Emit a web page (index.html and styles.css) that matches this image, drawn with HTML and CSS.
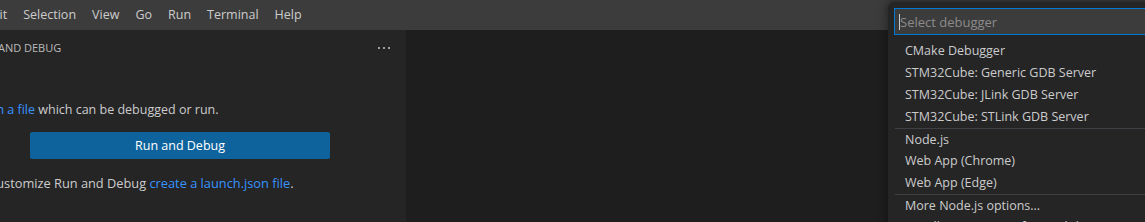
FILE: index.html
```html
<!DOCTYPE html>
<html>
<head>
<meta charset="utf-8">
<link rel="stylesheet" href="styles.css">
</head>
<body>
<div class="window">
  <div class="titlebar">
    <nav class="menubar">
      <span class="menu">Edit</span>
      <span class="menu">Selection</span>
      <span class="menu">View</span>
      <span class="menu">Go</span>
      <span class="menu">Run</span>
      <span class="menu">Terminal</span>
      <span class="menu">Help</span>
    </nav>
  </div>
  <div class="main">
    <aside class="sidebar">
      <div class="sidebar-header">
        <span class="sidebar-title">Run and Debug</span>
        <span class="more">
          <svg width="16" height="16" viewBox="0 0 16 16"><circle cx="3" cy="8" r="1" fill="#c5c5c5"/><circle cx="8" cy="8" r="1" fill="#c5c5c5"/><circle cx="13" cy="8" r="1" fill="#c5c5c5"/></svg>
        </span>
      </div>
      <div class="welcome">
        <p class="para"><a class="link">Open a file</a> which can be debugged or run.</p>
        <div class="btn-wrap"><button class="btn">Run and Debug</button></div>
        <p class="para">To customize Run and Debug <a class="link">create a launch.json file</a>.</p>
      </div>
    </aside>
    <section class="editor"></section>
  </div>

  <div class="quickpick">
    <div class="qp-input"><span class="caret"></span><span class="placeholder">Select debugger</span></div>
    <ul class="qp-list">
      <li class="qp-row">CMake Debugger</li>
      <li class="qp-row">STM32Cube: Generic GDB Server</li>
      <li class="qp-row">STM32Cube: JLink GDB Server</li>
      <li class="qp-row">STM32Cube: STLink GDB Server</li>
      <li class="qp-row sep">Node.js</li>
      <li class="qp-row">Web App (Chrome)</li>
      <li class="qp-row">Web App (Edge)</li>
      <li class="qp-row sep">More Node.js options...</li>
      <li class="qp-row">Install an extension for Markdown...</li>
    </ul>
  </div>
</div>
</body>
</html>
```
FILE: styles.css
```css
* { box-sizing: border-box; }
html, body { margin: 0; padding: 0; }
body {
  width: 1145px;
  height: 222px;
  overflow: hidden;
  background: #1e1e1e;
  font-family: "Open Sans", "Noto Sans", sans-serif;
  font-size: 12px;
  color: #cccccc;
}
.window { position: relative; width: 1145px; height: 222px; overflow: hidden; }
.titlebar {
  height: 30px;
  background: #3c3c3c;
  display: flex;
  align-items: center;
}
.menubar { display: flex; margin-left: -23px; }
.menu { padding: 0 8px; font-size: 12.5px; color: #cccccc; line-height: 30px; }
.main { display: flex; height: 192px; }
.sidebar {
  width: 452px;
  margin-left: -46px;
  background: #252526;
  flex: none;
}
.sidebar-header {
  height: 35px;
  display: flex;
  align-items: center;
  justify-content: space-between;
  padding: 0 10px 0 18px;
}
.sidebar-title { text-transform: uppercase; font-size: 11px; color: #bbbbbb; }
.more { display: flex; margin-right: 4px; }
.welcome { padding: 0 18px; }
.para { margin: 0; font-size: 12.5px; line-height: 18px; }
.welcome .para:first-child { margin-top: 36px; }
.link { color: #3794ff; }
.btn-wrap { display: flex; justify-content: center; margin-top: 13px; }
.btn {
  width: 300px;
  height: 27px;
  border: none;
  border-radius: 2px;
  background: #0e639c;
  color: #ffffff;
  font-family: inherit;
  font-size: 12.5px;
}
.welcome .para:last-child { margin-top: 15px; font-size: 12.8px; }
.editor { flex: 1; background: #1e1e1e; }

.quickpick {
  position: absolute;
  left: 888px;
  top: 2px;
  width: 600px;
  height: 260px;
  background: #252526;
  border-radius: 6px;
  box-shadow: 0 0 8px 2px rgba(0,0,0,0.36);
  padding: 6px 6px 0 6px;
}
.qp-input {
  height: 27px;
  border: 1px solid #0078d4;
  background: #3c3c3c;
  display: flex;
  align-items: center;
  padding-left: 4px;
}
.caret { width: 1px; height: 16px; background: #cccccc; }
.placeholder { color: #8b8b8b; font-size: 13px; }
.qp-list { list-style: none; margin: 5px 0 0 0; padding: 0; }
.qp-row {
  height: 22px;
  line-height: 22px;
  padding-left: 11px;
  font-size: 12.5px;
  color: #cccccc;
}
.qp-row.sep { border-top: 1px solid #3f3f46; line-height: 21px; margin-left: 1px; padding-left: 10px; }
```
